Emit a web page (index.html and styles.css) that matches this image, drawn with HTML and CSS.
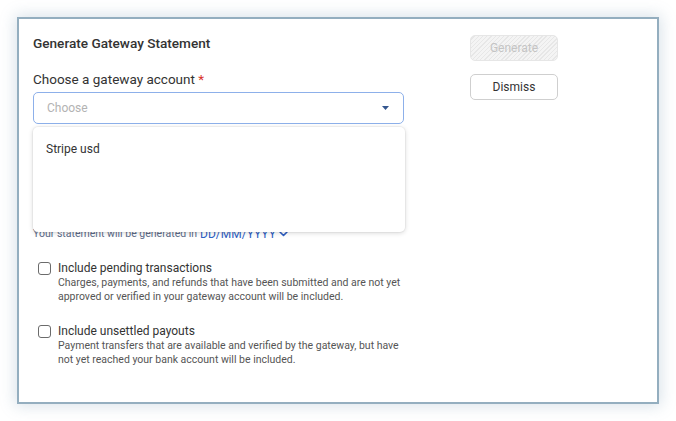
FILE: index.html
```html
<!DOCTYPE html>
<html>
<head>
<meta charset="utf-8">
<link rel="stylesheet" href="styles.css">
</head>
<body>
<div class="card">
  <div class="form">
    <h1 class="title">Generate Gateway Statement</h1>
    <div class="label">Choose a gateway account <span class="req">*</span></div>
    <div class="select">
      <span class="placeholder">Choose</span>
      <svg class="caret" width="7" height="4" viewBox="0 0 7 4"><path d="M0 0h7L3.5 4z" fill="#34568f"/></svg>
    </div>
    <div class="dropdown">
      <div class="option">Stripe usd</div>
    </div>
    <div class="hint">Your statement will be generated in <span class="fmt">DD/MM/YYYY</span>
      <svg class="chev" width="9" height="6" viewBox="0 0 9 6"><path d="M1 1l3.5 3.5L8 1" fill="none" stroke="#2f5fc4" stroke-width="1.6" stroke-linecap="round" stroke-linejoin="round"/></svg>
    </div>
    <div class="check-row first">
      <span class="box"></span>
      <div class="check-text">
        <div class="check-label">Include pending transactions</div>
        <div class="check-desc">Charges, payments, and refunds that have been submitted and are not yet approved or verified in your gateway account will be included.</div>
      </div>
    </div>
    <div class="check-row">
      <span class="box"></span>
      <div class="check-text">
        <div class="check-label">Include unsettled payouts</div>
        <div class="check-desc">Payment transfers that are available and verified by the gateway, but have not yet reached your bank account will be included.</div>
      </div>
    </div>
  </div>
  <div class="actions">
    <button class="btn btn-disabled">Generate</button>
    <button class="btn btn-outline">Dismiss</button>
  </div>
</div>
</body>
</html>
```
FILE: styles.css
```css
html, body {
  margin: 0;
  background: #ffffff;
}
body {
  padding: 17px;
  font-family: "Roboto", "Liberation Sans", sans-serif;
  color: #333333;
}
.card {
  box-sizing: border-box;
  width: 642px;
  height: 387px;
  border: 2px solid #94aebf;
  box-shadow: 0 0 14px 2px rgba(120, 150, 175, 0.28);
  padding: 14px;
  display: flex;
  gap: 66px;
  background: #fff;
}
.form {
  width: 371px;
  position: relative;
}
.title {
  margin: 0;
  font-size: 13.6px;
  font-weight: 500;
  line-height: 21px;
  color: #333;
}
.label {
  margin-top: 15px;
  font-size: 13.5px;
  line-height: 20px;
  color: #333;
}
.req { color: #d9342b; }
.select {
  box-sizing: border-box;
  margin-top: 3px;
  height: 32px;
  border: 1px solid #8db0ea;
  border-radius: 5px;
  padding: 0 13px;
  display: flex;
  align-items: center;
  justify-content: space-between;
}
.placeholder {
  font-size: 12px;
  color: #b3b3b3;
}
.caret { margin-right: 1px; }
.dropdown {
  position: absolute;
  top: 94px;
  left: 0;
  width: 372px;
  height: 105px;
  box-sizing: border-box;
  background: #fff;
  border-radius: 5px;
  box-shadow: 0 1px 5px rgba(0, 0, 0, 0.16), 0 0 0 1px rgba(0, 0, 0, 0.03);
  padding: 12px 13px;
  z-index: 2;
}
.option {
  font-size: 12px;
  line-height: 20px;
  color: #333;
}
.hint {
  margin-top: 103px;
  font-size: 10.5px;
  line-height: 14px;
  color: #5b6a88;
  display: flex;
  align-items: center;
}
.fmt {
  font-size: 12px;
  color: #2f5fc4;
  margin-left: 3px;
}
.chev { margin-left: 3px; }
.check-row {
  display: flex;
  margin-top: 20px;
  padding-left: 5px;
}
.check-row.first { margin-top: 19px; }
.box {
  box-sizing: border-box;
  flex: none;
  width: 13px;
  height: 13px;
  border: 1.3px solid #6b6b6b;
  border-radius: 3px;
  margin-top: 1.5px;
  margin-right: 7px;
}
.check-label {
  font-size: 12px;
  line-height: 16px;
  color: #333;
}
.check-desc {
  font-size: 10.5px;
  line-height: 13.5px;
  color: #555;
  width: 350px;
}
.actions {
  width: 88px;
  display: flex;
  flex-direction: column;
  gap: 13px;
  padding-top: 2px;
}
.btn {
  box-sizing: border-box;
  height: 26px;
  width: 88px;
  border-radius: 5px;
  font-family: "Roboto", "Liberation Sans", sans-serif;
  font-size: 12px;
  padding: 0;
}
.btn-disabled {
  border: 1px solid #e6e6e6;
  color: #c4c4c4;
  background: repeating-linear-gradient(135deg, #f4f4f4 0, #f4f4f4 2px, #e7e7e7 2px, #e7e7e7 3px);
}
.btn-outline {
  border: 1px solid #cfcfcf;
  background: #fff;
  color: #333;
}
```
